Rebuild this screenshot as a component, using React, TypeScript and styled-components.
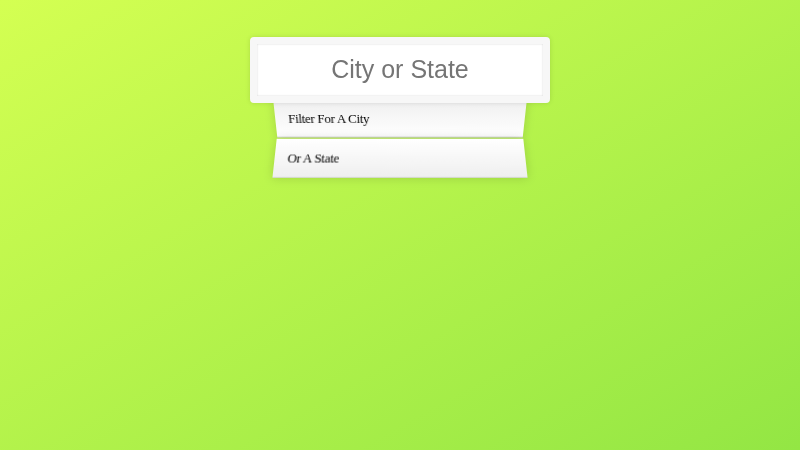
import styled, { createGlobalStyle } from "styled-components";

const GlobalStyle = createGlobalStyle`
  *, *::before, *::after {
    box-sizing: border-box;
  }
  html, body, #root {
    height: 100%;
    margin: 0;
  }
  body {
    background: linear-gradient(to bottom right, #d4ff52 0%, #93e644 100%);
    font-family: "Liberation Serif", "Times New Roman", serif;
  }
`;

const SearchForm = styled.form`
  width: 250px;
  margin: 0 auto;
  padding-top: 37px;
  display: flex;
  flex-direction: column;
  align-items: center;
`;

const SearchInput = styled.input`
  width: 300px;
  margin: 0;
  padding: 11px 20px 12px;
  border: 7px solid #f7f7f7;
  border-radius: 4px;
  outline: 0;
  background: #ffffff;
  text-align: center;
  font-family: "Liberation Sans", Arial, sans-serif;
  font-size: 25px;
  color: #333;
  position: relative;
  z-index: 2;
  box-shadow: 0 0 5px rgba(0, 0, 0, 0.12), inset 0 0 2px rgba(0, 0, 0, 0.19);

  &::placeholder {
    color: #757575;
  }
`;

const Suggestions = styled.ul`
  width: 250px;
  margin: -6px 0 0;
  padding: 0;
  list-style: none;
`;

const Suggestion = styled.li<{ $even?: boolean }>`
  margin: 0;
  padding: 10.5px 13px;
  line-height: 17px;
  font-size: 13px;
  letter-spacing: -0.3px;
  color: #000;
  border-bottom: 1px solid #d8d8d8;
  box-shadow: 0 0 10px rgba(0, 0, 0, 0.14);
  text-transform: capitalize;
  display: flex;
  justify-content: space-between;
  background: ${(p) =>
    p.$even
      ? "linear-gradient(to bottom, #ffffff 0%, #efefef 100%)"
      : "linear-gradient(to top, #ffffff 0%, #efefef 100%)"};
  transform: ${(p) =>
    p.$even
      ? "perspective(60px) rotateX(3deg) translateY(2.5px) scale(1.001)"
      : "perspective(60px) rotateX(-3deg) translateY(2px)"};
`;

const App = () => {
  return (
    <>
      <GlobalStyle />
      <SearchForm onSubmit={(e) => e.preventDefault()}>
        <SearchInput type="text" placeholder="City or State" />
        <Suggestions>
          <Suggestion>Filter for a city</Suggestion>
          <Suggestion $even>or a state</Suggestion>
        </Suggestions>
      </SearchForm>
    </>
  );
};

export default App;
